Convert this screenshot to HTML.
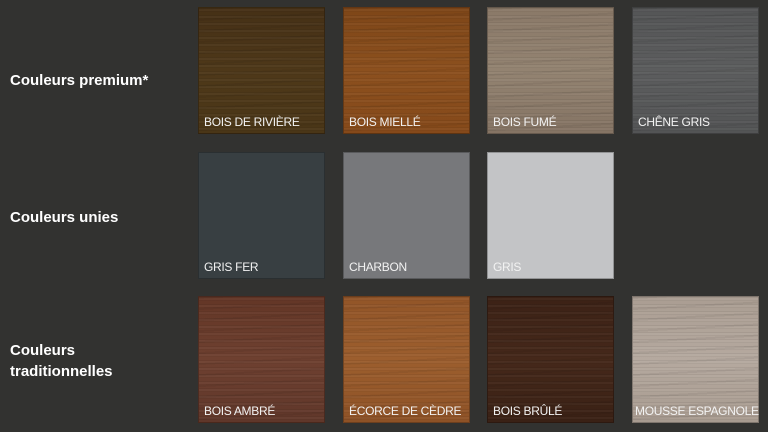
<!DOCTYPE html>
<html><head><meta charset="utf-8"><style>
html,body{margin:0;padding:0;}
body{width:768px;height:432px;background:#323230;position:relative;overflow:hidden;font-family:"Liberation Sans",sans-serif;}
.h{position:absolute;left:10px;color:#fff;font-weight:bold;font-size:15px;line-height:21px;}
.s{position:absolute;width:127px;height:127px;box-sizing:border-box;border:1px solid rgba(0,0,0,.25);}
.s.w::before{content:"";position:absolute;inset:0;background:repeating-linear-gradient(180deg,rgba(0,0,0,.06) 0 1px,rgba(255,255,255,.03) 1px 3px,rgba(0,0,0,.04) 3px 4px,transparent 4px 7px),repeating-linear-gradient(177deg,rgba(0,0,0,.06) 0 2px,transparent 2px 11px);}
.s span{position:absolute;left:5px;bottom:4px;color:#f2f2f2;font-size:12px;letter-spacing:-0.3px;white-space:nowrap;}
</style></head><body>
<div class="h" style="top:70px">Couleurs premium*</div>
<div class="h" style="top:207px">Couleurs unies</div>
<div class="h" style="top:340px">Couleurs<br>traditionnelles</div>

<div class="s w" style="left:198px;top:7px;background:linear-gradient(180deg,#453016,#4e3819 50%,#4a3617)"><span>BOIS DE RIVIÈRE</span></div>
<div class="s w" style="left:343px;top:7px;background:linear-gradient(180deg,#7e4618,#8c501e 50%,#85491a)"><span>BOIS MIELLÉ</span></div>
<div class="s w" style="left:487px;top:7px;background:linear-gradient(180deg,#8a7968,#938371 50%,#857464)"><span>BOIS FUMÉ</span></div>
<div class="s w" style="left:632px;top:7px;background:linear-gradient(180deg,#545556,#5c5d5e 50%,#535455)"><span>CHÊNE GRIS</span></div>

<div class="s" style="left:198px;top:152px;background:#383f42"><span>GRIS FER</span></div>
<div class="s" style="left:343px;top:152px;background:#77787b"><span>CHARBON</span></div>
<div class="s" style="left:487px;top:152px;background:#c3c4c6"><span>GRIS</span></div>

<div class="s w" style="left:198px;top:296px;background:linear-gradient(180deg,#633626,#6e4030 50%,#60372a)"><span>BOIS AMBRÉ</span></div>
<div class="s w" style="left:343px;top:296px;background:linear-gradient(180deg,#925528,#9c5e2e 50%,#8e5226)"><span>ÉCORCE DE CÈDRE</span></div>
<div class="s w" style="left:487px;top:296px;background:linear-gradient(180deg,#3c2216,#45281a 50%,#3a2115)"><span>BOIS BRÛLÉ</span></div>
<div class="s w" style="left:632px;top:296px;background:linear-gradient(180deg,#aa9d92,#b5a99f 50%,#a89b90)"><span style="left:2px">MOUSSE ESPAGNOLE</span></div>
</body></html>
